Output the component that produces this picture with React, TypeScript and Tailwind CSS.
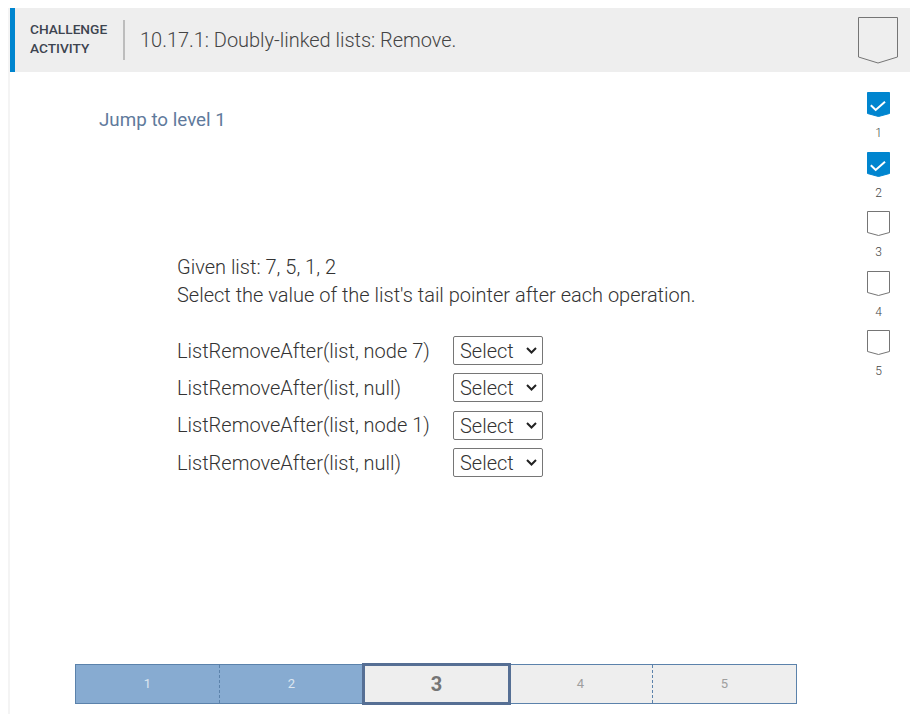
const rows = ["node 7", "null", "node 1", "null"];

const BigTag = () => (
  <svg viewBox="0 0 40 47" className="ml-auto h-[47px] w-10">
    <path d="M0.5 0.5H39.5V40L20 46L0.5 40Z" fill="none" stroke="#757575" />
  </svg>
);

const Tag = ({ done }: { done?: boolean }) => (
  <svg viewBox="0 0 23 25" className="h-[25px] w-[23px]">
    <path
      d="M0.5 0.5H22.5V21.5L11.5 24.5L0.5 21.5Z"
      fill={done ? "#0085cf" : "none"}
      stroke={done ? "#0085cf" : "#757575"}
    />
    {done && <path d="M3.8 13.3L8.7 18L18 9.7" fill="none" stroke="#fff" strokeWidth="2" />}
  </svg>
);

const Level = ({ n, done }: { n: number; done?: boolean }) => (
  <div className="flex h-[59.5px] flex-col items-center">
    <Tag done={done} />
    <span className="mt-[8px] text-[12px] leading-[16px] font-light text-[#444]">{n}</span>
  </div>
);

const Segment = ({ n, done, last }: { n: number; done?: boolean; last?: boolean }) => (
  <div
    className={`flex h-full shrink-0 items-center justify-center text-[13px] font-normal ${
      done ? "bg-[#87abd1] text-[#dde7f0]" : "bg-[#eeeeee] text-[#9e9e9e]"
    } ${last ? "w-[143px]" : "w-[144px] border-r border-dashed border-[#5b82ab]"}`}
  >
    {n}
  </div>
);

const Select = () => (
  <div className="relative h-[29px] w-[90px]">
    <select className="h-full w-full appearance-none rounded-[2px] border border-[#767676] bg-white pb-[4px] pl-[6px] font-light text-[#333]">
      <option>Select</option>
    </select>
    <svg viewBox="0 0 11 7" className="pointer-events-none absolute top-[11px] left-[73px] h-[7px] w-[11px]">
      <path d="M1 1L5.5 5.5L10 1" fill="none" stroke="#222" strokeWidth="2" />
    </svg>
  </div>
);

export default function App() {
  return (
    <div className="h-[714px] w-[910px] overflow-hidden bg-white pt-2 pl-2 font-['Roboto',sans-serif] font-light text-[#333]">
      <div className="h-full border-l-2 border-[#f4f4f4]">
        <header className="flex h-16 items-center border-l-[5px] border-[#0085cf] bg-[#eeeeee] pr-3">
          <div className="-mt-[2px] ml-[15px] w-[79px] text-[13.7px] leading-[19px] font-medium text-[#3d4450]">
            CHALLENGE
            <br />
            ACTIVITY
          </div>
          <div className="ml-[14px] h-10 w-0.5 bg-[#bdbdbd]" />
          <h1 className="ml-[15px] text-[20px] tracking-[-0.03px] font-light text-[#444]">10.17.1: Doubly-linked lists: Remove.</h1>
          <BigTag />
        </header>

        <div className="flex">
          <div className="w-[857px]">
            <div className="mt-[36px] ml-[89px] text-[18.8px] leading-[24px] font-normal text-[#5f7a9c]">Jump to level 1</div>

            <div className="mt-[121px] ml-[167px] text-[20px] leading-[28px]">
              <p>Given list: 7, 5, 1, 2</p>
              <p>Select the value of the list's tail pointer after each operation.</p>
              <div className="mt-[27px] flex flex-col gap-[8px]">
                {rows.map((r, i) => (
                  <div key={i} className="flex h-[29.3px] items-center">
                    <span className="w-[276px]">ListRemoveAfter(list, {r})</span>
                    <Select />
                  </div>
                ))}
              </div>
            </div>

            <div className="mt-[187px] ml-[65px] flex h-10 w-[722px] items-center border border-[#5b82ab]">
              <Segment n={1} done />
              <Segment n={2} done />
              <div className="z-10 -mx-[2px] flex h-[42px] w-[149px] shrink-0 items-center justify-center border-[3px] border-[#566f94] bg-[#eeeeee] text-[20px] font-bold text-[#757575]">
                3
              </div>
              <Segment n={4} />
              <Segment n={5} last />
            </div>
          </div>

          <aside className="mt-[20px] flex w-[23px] flex-col">
            <Level n={1} done />
            <Level n={2} done />
            <Level n={3} />
            <Level n={4} />
            <Level n={5} />
          </aside>
        </div>
      </div>
    </div>
  );
}
